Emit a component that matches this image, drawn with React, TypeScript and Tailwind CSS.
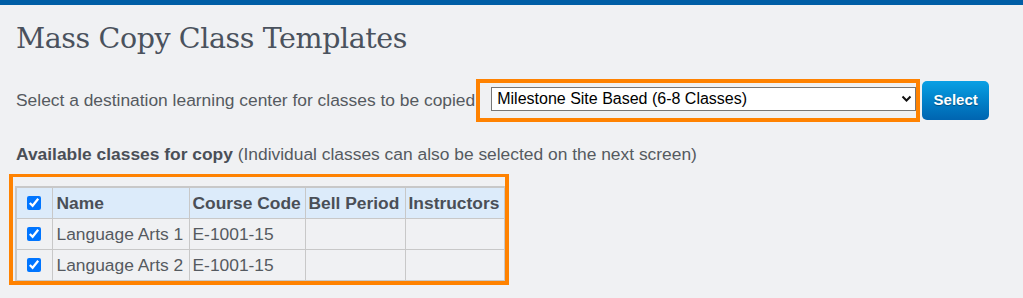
import React from 'react';

type ClassRow = { name: string; code: string; bell: string; instructors: string };

const rows: ClassRow[] = [
  { name: 'Language Arts 1', code: 'E-1001-15', bell: '', instructors: '' },
  { name: 'Language Arts 2', code: 'E-1001-15', bell: '', instructors: '' },
];

const App: React.FC = () => {
  return (
    <div className="min-h-[298px] bg-[#f0f1f3] font-['Liberation_Sans',Arial,sans-serif] text-[#555a60]">
      <div className="h-[5px] bg-[#005ea6]" />
      <div className="pl-4">
        <h1 className="pt-[16px] font-['DejaVu_Serif',serif] text-[28.5px] leading-[36px] tracking-[-0.4px] text-[#4a525d]">
          Mass Copy Class Templates
        </h1>

        <div className="mt-[22px] flex items-center">
          <span className="text-[17.4px]">Select a destination learning center for classes to be copied</span>
          <div className="ml-[1px] border-[4px] border-[#ff8200] pt-[4px] pb-[7px] pl-[11px]">
            <div className="relative">
              <select
                defaultValue="ms"
                className="block h-[24px] w-[425px] appearance-none border border-[#767676] bg-white pl-[5px] text-[16px] leading-[20px] text-black"
              >
                <option value="ms">Milestone Site Based (6-8 Classes)</option>
              </select>
              <svg
                className="pointer-events-none absolute right-[4px] top-[8px]"
                width="11"
                height="8"
                viewBox="0 0 11 8"
              >
                <path d="M1.5 1.5 L5.5 5.5 L9.5 1.5" fill="none" stroke="#111" strokeWidth="2" />
              </svg>
            </div>
          </div>
          <button className="ml-[2px] flex h-[39px] w-[67px] items-center justify-center rounded-[5px] bg-gradient-to-b from-[#0aa0e4] to-[#0064b0] text-[15px] font-bold text-white [text-shadow:0_1px_1px_rgba(0,0,0,0.35)]">
            Select
          </button>
        </div>

        <p className="mt-[21px] text-[17.4px] leading-[22px]">
          <span className="font-bold text-[#4a4f57]">Available classes for copy</span> (Individual classes can also be selected on the next screen)
        </p>
      </div>

      <div className="ml-[9px] mt-[9px] w-[500px] border-[4px] border-t-[3px] border-[#ff8200] pl-[2px] pt-[9px]">
        <table className="border-collapse border-l-2 border-t-2 border-[#c8c8c8] text-[17.4px] leading-[20px]">
          <thead>
            <tr className="h-[31px] bg-[#dcebfa] font-bold text-[#4a4f57]">
              <th className="w-[36px] border border-[#c8c8c8] text-center">
                <input type="checkbox" defaultChecked className="mt-[4px] h-[14px] w-[14px] accent-[#0075ff]" />
              </th>
              <th className="w-[137px] border border-[#c8c8c8] px-[4px] text-left">Name</th>
              <th className="w-[116px] border border-[#c8c8c8] px-[3px] text-left">Course Code</th>
              <th className="w-[100px] border border-[#c8c8c8] px-[3px] text-left">Bell Period</th>
              <th className="w-[99px] border border-[#c8c8c8] px-[3px] text-left">Instructors</th>
            </tr>
          </thead>
          <tbody>
            {rows.map(r => (
              <tr key={r.name} className="h-[31px]">
                <td className="border border-[#c8c8c8] text-center">
                  <input type="checkbox" defaultChecked className="mt-[4px] h-[14px] w-[14px] accent-[#0075ff]" />
                </td>
                <td className="border border-[#c8c8c8] px-[4px]">{r.name}</td>
                <td className="border border-[#c8c8c8] px-[3px]">{r.code}</td>
                <td className="border border-[#c8c8c8] px-[3px]">{r.bell}</td>
                <td className="border border-[#c8c8c8] px-[3px]">{r.instructors}</td>
              </tr>
            ))}
          </tbody>
        </table>
      </div>
    </div>
  );
};

export default App;
